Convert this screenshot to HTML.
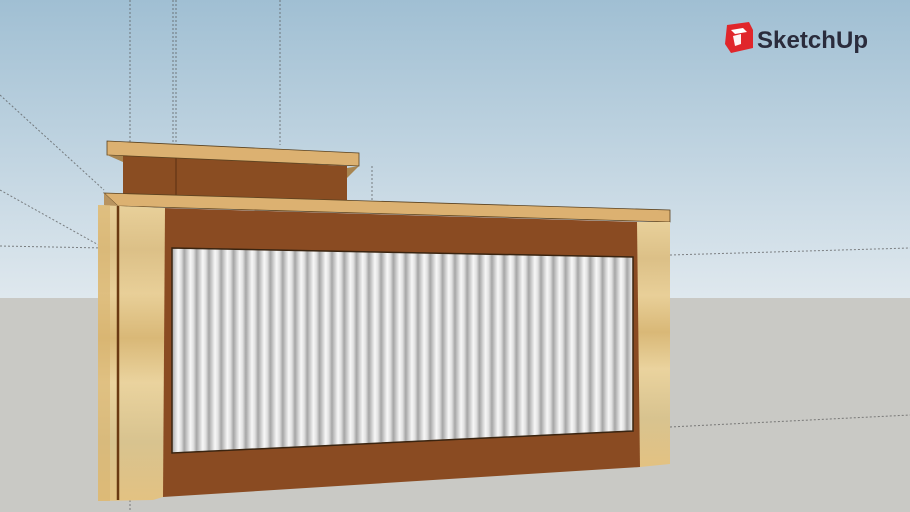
<!DOCTYPE html>
<html><head><meta charset="utf-8"><style>
html,body{margin:0;padding:0;width:910px;height:512px;overflow:hidden}
svg{display:block}
</style></head><body>
<svg width="910" height="512" viewBox="0 0 910 512" xmlns="http://www.w3.org/2000/svg">
<defs>
<linearGradient id="sky" x1="0" y1="0" x2="0" y2="1">
<stop offset="0" stop-color="#a0bfd3"/><stop offset="1" stop-color="#dfe8ee"/>
</linearGradient>
<linearGradient id="wave" x1="0" y1="0" x2="1" y2="0">
<stop offset="0" stop-color="#a5a5a5"/><stop offset="0.3" stop-color="#d8d8d8"/>
<stop offset="0.5" stop-color="#f7f7f7"/><stop offset="0.75" stop-color="#e0e0e0"/>
<stop offset="1" stop-color="#a5a5a5"/>
</linearGradient>
<pattern id="corr" x="172" y="0" width="12.3" height="10" patternUnits="userSpaceOnUse">
<rect width="12.3" height="10" fill="url(#wave)"/>
</pattern>
<linearGradient id="post" x1="0" y1="0" x2="0" y2="1">
<stop offset="0" stop-color="#e8d09a"/><stop offset="0.15" stop-color="#dcc087"/>
<stop offset="0.3" stop-color="#e8cf98"/><stop offset="0.45" stop-color="#d9b877"/>
<stop offset="0.6" stop-color="#ead39e"/><stop offset="0.8" stop-color="#d8c38f"/>
<stop offset="1" stop-color="#e3c282"/>
</linearGradient>
</defs>
<rect width="910" height="298" fill="url(#sky)"/>
<rect y="298" width="910" height="214" fill="#c9c9c5"/>
<g stroke="#555" stroke-width="1" stroke-dasharray="2,2" fill="none" opacity="0.7">
<line x1="130" y1="0" x2="130" y2="512"/>
<line x1="173" y1="0" x2="173" y2="160"/>
<line x1="176" y1="0" x2="176" y2="160"/>
<line x1="280" y1="0" x2="280" y2="145"/>
<line x1="372" y1="166" x2="372" y2="200"/>
<line x1="0" y1="95" x2="104" y2="190"/>
<line x1="0" y1="190" x2="104" y2="248"/>
<line x1="0" y1="246" x2="104" y2="248"/>
<line x1="670" y1="255" x2="910" y2="248"/>
<line x1="670" y1="427" x2="910" y2="415"/>
</g>
<!-- top cap -->
<polygon points="123,155 347,166 347,202 123,198" fill="#8a4d22"/>
<line x1="176" y1="158" x2="176" y2="198" stroke="#5a3012" stroke-width="1"/>
<polygon points="359,166 347,178 347,168" fill="#a88550"/>
<polygon points="107,141 359,153 359,166 107,155" fill="#dcb171" stroke="#5a4220" stroke-width="0.8"/>
<polygon points="107,155 123,162 123,156" fill="#a88550"/>
<!-- main top board -->
<polygon points="104,193 670,210 670,222 118,206" fill="#dcb171" stroke="#5a4220" stroke-width="0.8"/>
<polygon points="104,193 118,206 118,210 104,205" fill="#b89460"/>
<!-- brown frame -->
<polygon points="163,208 640,222 640,467 163,497" fill="#8a4b22"/>
<!-- corrugated -->
<polygon points="172,248 633,257 633,431 172,453" fill="url(#corr)" stroke="#3a2410" stroke-width="1.5"/>
<!-- left post -->
<polygon points="98,205 165,208 163,497 153,500 98,501" fill="url(#post)"/>
<line x1="118" y1="206" x2="118" y2="500" stroke="#6a3a12" stroke-width="2.5"/>
<rect x="98" y="205" width="12" height="296" fill="#d9b470" opacity="0.6"/>
<!-- right post -->
<polygon points="637,222 670,222 670,464 640,467" fill="url(#post)"/>
<!-- logo -->
<g transform="translate(725,22)">
<polygon points="2,3 24,0 28,8 28,26 6,31 0,22" fill="#e0262b"/>
<polygon points="6,8 18,6 22,10 10,12" fill="#fff"/>
<polygon points="8,14 16,12 16,22 10,24" fill="#fff" opacity="0.95"/>
</g>
<text x="757" y="48" font-family="Liberation Sans, sans-serif" font-weight="bold" font-size="24" fill="#2a2c3c" textLength="111">SketchUp</text>
</svg>
</body></html>
